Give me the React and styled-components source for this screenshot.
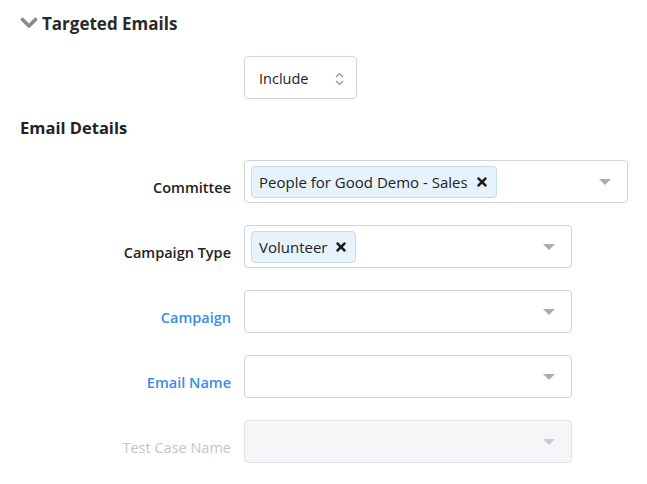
import React from 'react';
import styled, { createGlobalStyle } from 'styled-components';
import { FaTimes } from 'react-icons/fa';

const GlobalStyle = createGlobalStyle`
    body {
        margin: 0;
        background: #fff;
        font-family: 'Open Sans', 'Noto Sans', sans-serif;
        color: #212529;
    }
`;

const Page = styled.div`
    padding: 12px 20px 0 20px;
`;

const SectionHeader = styled.div`
    display: flex;
    align-items: center;
    gap: 4px;
    font-size: 17px;
    font-weight: 700;
    color: #2a2a2a;
    height: 22px;
`;

const IncludeRow = styled.div`
    padding-left: 224px;
    margin-top: 22px;
`;

const NativeSelect = styled.div`
    display: flex;
    align-items: center;
    justify-content: space-between;
    width: 113px;
    height: 43px;
    box-sizing: border-box;
    padding: 2px 12px 0 14px;
    border: 1px solid #d2d6dc;
    border-radius: 4px;
    font-size: 14.5px;
    color: #222;
`;

const SubHeader = styled.div`
    margin-top: 17px;
    font-size: 16.5px;
    font-weight: 700;
    color: #222;
`;

const Form = styled.div`
    display: flex;
    flex-direction: column;
    gap: 22px;
    margin-top: 21px;
`;

const Row = styled.div`
    display: grid;
    grid-template-columns: 211px ${p => p.$wide ? '384px' : '328px'};
    column-gap: 13px;
    align-items: center;
`;

const Label = styled.label`
    text-align: right;
    font-size: 14.5px;
    font-weight: ${p => p.$muted ? 400 : 600};
    color: ${p => p.$tone === 'blue' ? '#3a8de4' : p.$tone === 'muted' ? '#c3c5c8' : '#222'};
    padding-top: 12px;
`;

const Control = styled.div`
    position: relative;
    display: flex;
    align-items: center;
    height: 43px;
    box-sizing: border-box;
    padding: 0 40px 0 6px;
    border: 1px solid ${p => p.$disabled ? '#e1e4e8' : '#d0d4da'};
    border-radius: 4px;
    background: ${p => p.$disabled ? '#f5f6f8' : '#fff'};
`;

const Caret = styled.span`
    position: absolute;
    right: 16px;
    top: 18px;
    width: 0;
    height: 0;
    border-left: 6px solid transparent;
    border-right: 6px solid transparent;
    border-top: 6px solid ${p => p.$disabled ? '#c9ccd1' : '#a9adb3'};
`;

const Tag = styled.span`
    display: inline-flex;
    align-items: center;
    gap: 7px;
    height: 32px;
    box-sizing: border-box;
    padding: 0 7px 0 7px;
    background: #e6f3fd;
    border: 1px solid #c6dcee;
    border-radius: 4px;
    font-size: 15px;
    color: #222;
    svg {
        width: 14px;
        height: 14px;
        color: #1c1c1c;
    }
`;

const Chevron = () => (
    <svg width="18" height="12" viewBox="0 0 18 12" fill="none" stroke="#8a8a8a" strokeWidth="3.6" strokeLinecap="round" strokeLinejoin="round">
        <path d="M2.5 2.5 L9 9 L15.5 2.5" />
    </svg>
);

const SortIcon = () => (
    <svg width="9" height="14" viewBox="0 0 9 14" fill="none" stroke="#8a8f96" strokeWidth="1.1">
        <path d="M1 5 L4.5 1.5 L8 5" />
        <path d="M1 9 L4.5 12.5 L8 9" />
    </svg>
);

const fields = [
    { label: 'Committee', tag: 'People for Good Demo - Sales', wide: true },
    { label: 'Campaign Type', tag: 'Volunteer' },
    { label: 'Campaign', tone: 'blue' },
    { label: 'Email Name', tone: 'blue' },
    { label: 'Test Case Name', tone: 'muted', disabled: true },
];

export default function App() {
    return (
        <Page>
            <GlobalStyle />
            <SectionHeader><Chevron />Targeted Emails</SectionHeader>
            <IncludeRow>
                <NativeSelect>Include<SortIcon /></NativeSelect>
            </IncludeRow>
            <SubHeader>Email Details</SubHeader>
            <Form>
                {fields.map((f, i) => (
                    <Row key={i} $wide={f.wide}>
                        <Label $tone={f.tone} $muted={f.tone === 'muted'}>{f.label}</Label>
                        <Control $disabled={f.disabled}>
                            {f.tag && <Tag>{f.tag}<FaTimes /></Tag>}
                            <Caret $disabled={f.disabled} />
                        </Control>
                    </Row>
                ))}
            </Form>
        </Page>
    );
}
